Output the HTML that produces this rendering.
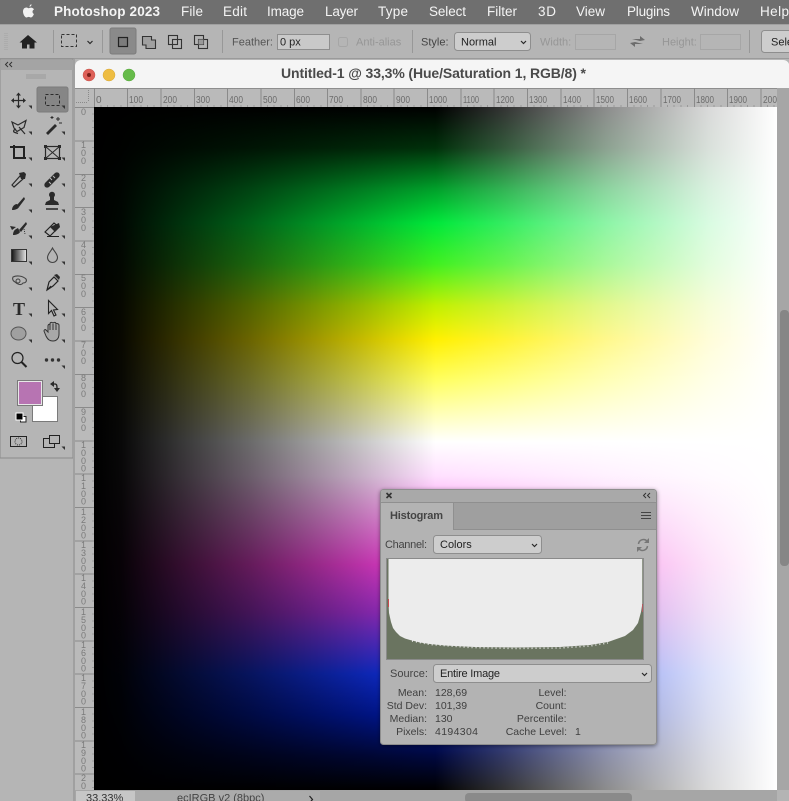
<!DOCTYPE html>
<html><head><meta charset="utf-8"><style>
html,body{margin:0;padding:0;width:789px;height:801px;overflow:hidden;background:#b5b5b5}
#c,#c div{position:absolute;left:94px;top:107px;width:683px;height:683px}
#c div{left:0;top:0}
#c{background:linear-gradient(to bottom,#000 0,#00300a 6%,#00a02a 12%,#00e83a 17%,#40f020 23%,#c0f000 29%,#fff000 34%,#ffff60 40%,#fff 49%,#ffe0ff 54%,#f040d8 67%,#a030d0 74%,#1030e0 83%,#0018a0 89%,#000840 95%,#000 100%)}
#l{background:linear-gradient(to right,#000 0,rgba(0,0,0,.97) 4%,rgba(0,0,0,.78) 13%,rgba(0,0,0,.58) 23%,rgba(0,0,0,.36) 33%,rgba(0,0,0,.12) 44%,rgba(0,0,0,0) 50%)}
#r{background:linear-gradient(to right,rgba(255,255,255,0) 50%,rgba(255,255,255,.2) 60%,rgba(255,255,255,.55) 75%,rgba(255,255,255,.85) 90%,#fff 100%)}
svg{position:absolute;left:0;top:0}
text{font-family:"Liberation Sans",sans-serif}
.m{font-size:13.5px;fill:#f4f4f4}
.o{font-size:10.5px;fill:#3e3e3e}
.d{font-size:10.5px;fill:#969696}
.t{font-size:10px;fill:#6c6c6c}
.v{font-size:9px;fill:#7a7a7a;text-anchor:middle}
.p{font-size:10.5px;fill:#3f3f3f}
.i{fill:none;stroke:#2a2a2a;stroke-width:1.2}
.f{fill:#2a2a2a}
</style></head><body>
<div id="c"><div id="l"></div><div id="r"></div></div>
<svg width="789" height="801" viewBox="0 0 789 801">
<defs><filter id="sh" x="-10%" y="-10%" width="120%" height="120%"><feDropShadow dx="0" dy="1" stdDeviation="2" flood-color="#000" flood-opacity=".45"/></filter></defs>

<!-- menu bar -->
<rect width="789" height="24" fill="#6f6f6f"/>
<path d="M31.5 4.2c-1.1.2-2 1.2-2 2.500 1.200 0 2.100-1.200 2-2.500zM26.500 7.500c-2.200 0-3.500 1.800-3.500 4 0 2.600 1.800 6 3.500 6 .8 0 1.200-.6 2.200-.6s1.300.6 2.200.6c1.300 0 2.500-2 3-3.500-1.500-.7-2-2.900-.4-4.200.3-.2.400-.4.500-.5-.7-1-1.800-1.700-2.900-1.700-1 0-1.700.6-2.400.6-.7 0-1.300-.7-2.200-.7z" fill="#f2f2f2"/>
<text x="54" y="16" class="m" font-weight="bold" textLength="106">Photoshop 2023</text>
<text x="181" y="16" class="m" textLength="22">File</text>
<text x="223" y="16" class="m" textLength="24">Edit</text>
<text x="267" y="16" class="m" textLength="37">Image</text>
<text x="325" y="16" class="m" textLength="33">Layer</text>
<text x="378" y="16" class="m" textLength="30">Type</text>
<text x="429" y="16" class="m" textLength="37">Select</text>
<text x="487" y="16" class="m" textLength="30">Filter</text>
<text x="538" y="16" class="m" textLength="18">3D</text>
<text x="576" y="16" class="m" textLength="29">View</text>
<text x="627" y="16" class="m" textLength="43">Plugins</text>
<text x="691" y="16" class="m" textLength="48">Window</text>
<text x="760" y="16" class="m" textLength="29">Help</text>

<!-- options bar -->
<rect y="24" width="789" height="35" fill="#b5b5b5"/>
<rect y="24" width="789" height="1" fill="#a0a0a0"/>
<rect y="58" width="789" height="1" fill="#9a9a9a"/>
<path d="M5 33v18M7 33v18" stroke="#a2a2a2" stroke-dasharray="1 1"/>
<path d="M28 35l-8.500 7.500h2.500v6h5v-4h2.500v4h5v-6h2.500z" fill="#222"/>
<path d="M53.500 30v23M102.500 30v23M222.500 30v23M412.500 30v23M749.500 30v23" stroke="#989898"/>
<rect x="61.500" y="34.500" width="15" height="12" fill="none" stroke="#333" stroke-dasharray="3 2"/>
<path d="M87.500 41l2.500 2.500 2.500-2.500" class="i"/>
<rect x="110" y="28" width="26" height="26" rx="2" fill="#8a8a8a" stroke="#7c7c7c"/>
<rect x="118.500" y="37.500" width="9" height="9" fill="#7c7c7c" stroke="#222" stroke-width="1.200"/>
<path d="M142.500 36.500h9v3.500h4v8.500h-9.500v-3.500h-3.500z" fill="#a0a0a0" stroke="#333" stroke-width="1.100"/>
<rect x="168.500" y="35.500" width="9" height="9" fill="none" stroke="#333" stroke-width="1.100"/>
<rect x="172.500" y="39.500" width="9" height="9" fill="none" stroke="#333" stroke-width="1.100"/>
<rect x="194.500" y="35.500" width="9" height="9" fill="none" stroke="#333" stroke-width="1.100"/>
<rect x="198.500" y="39.500" width="9" height="9" fill="none" stroke="#333" stroke-width="1.100"/>
<rect x="198.500" y="39.500" width="5" height="5" fill="#999"/>
<text x="232" y="45.500" style="font-size:11px;fill:#555">Feather:</text>
<rect x="277.500" y="34.500" width="52" height="15" fill="#c9c9c9" stroke="#8e8e8e"/>
<text x="280" y="45.500" style="font-size:11px;fill:#222">0 px</text>
<rect x="338.500" y="37.500" width="9" height="9" rx="2" fill="#b5b5b5" stroke="#a6a6a6"/>
<text x="356" y="45.500" class="d" style="font-size:11px">Anti-alias</text>
<text x="421" y="45.500" style="font-size:11px;fill:#444">Style:</text>
<rect x="454.500" y="32.500" width="76" height="18" rx="3" fill="#cdcdcd" stroke="#8e8e8e"/>
<text x="461" y="45.500" style="font-size:11px;fill:#222">Normal</text>
<path d="M521 41l2.500 2.500 2.500-2.500" class="i"/>
<text x="540" y="45.500" class="d" style="font-size:11px">Width:</text>
<rect x="575.500" y="34.500" width="40" height="15" fill="#b5b5b5" stroke="#a6a6a6"/>
<path d="M632 39h8v-3l5 4-5 1zM643 44h-8v3l-5-4 5-1z" fill="#6c6c6c"/>
<text x="662" y="45.500" class="d" style="font-size:11px">Height:</text>
<rect x="700.500" y="34.500" width="40" height="15" fill="#b5b5b5" stroke="#a6a6a6"/>
<rect x="761.500" y="30.500" width="40" height="22" rx="3" fill="#cdcdcd" stroke="#8e8e8e"/>
<text x="771" y="45.500" style="font-size:11px;fill:#222">Sele</text>

<!-- tool panel -->
<rect x="0" y="59" width="73" height="399" fill="#b5b5b5" stroke="#8c8c8c"/>
<rect x="1" y="60" width="72" height="10" fill="#a4a4a4"/>
<path d="M8 62l-2.500 2.500 2.500 2.500M12 62l-2.500 2.500 2.500 2.500" fill="none" stroke="#333"/>
<path d="M27 74v5M29 74v5M31 74v5M33 74v5M35 74v5M37 74v5M39 74v5M41 74v5M43 74v5M45 74v5" stroke="#9c9c9c"/>
<rect x="37" y="87" width="31" height="25" rx="2" fill="#868686" stroke="#7c7c7c"/>
<rect x="45.500" y="94.500" width="14" height="11" fill="none" stroke="#2c2c2c" stroke-dasharray="3 2"/>
<!-- move -->
<path d="M18.500 94v13M12 100.500h13" class="i"/><path d="M18.500 92.500l-2.500 3h5zM18.500 108.500l-2.500-3h5zM11 100.500l3-2.500v5zM26 100.500l-3-2.500v5z" class="f"/>
<!-- lasso -->
<path d="M12 122l6 3 8-4.500-2 7-7 4-3-3.500z" class="i"/><path d="M16 129c-3 1-3 3-1 3.500l3 1" class="i"/><path d="M19 127l6 7" class="i"/>
<!-- wand -->
<path d="M46 133l9-9 2 2-9 9z" fill="#2a2a2a"/><path d="M58 117v4M56 119h4M52 116v3M50.500 117.500h3M62 123h-3" stroke="#2a2a2a"/>
<!-- crop -->
<path d="M14 145v13h12M10 147h14v12" fill="none" stroke="#222" stroke-width="2"/>
<!-- frame -->
<rect x="45.500" y="146.500" width="14" height="12" fill="none" stroke="#2a2a2a" stroke-width="1.200"/><path d="M45.500 146.500l14 12M59.500 146.500l-14 12" stroke="#2a2a2a"/>
<path d="M44 145h3v3h-3zM58 145h3v3h-3zM44 157h3v3h-3zM58 157h3v3h-3z" class="f"/>
<!-- eyedropper -->
<path d="M12 185l8-9 3 3-9 8z" class="i"/><path d="M19 173l5-1 2 2-1 5-4 0z" class="f"/>
<!-- bandage -->
<path d="M45 183l10-10c3-2 6 1 4 4l-10 10c-3 2-6-1-4-4z" class="f"/><path d="M50 178l2 2M53 176l2 2M49 182l2 2" stroke="#bbb"/>
<!-- brush -->
<path d="M24 197l-7 8 2 2 6-8z" class="f"/><path d="M17 204c-2 0-5 2-5 6 3 0 6-1 7-3z" class="f"/>
<!-- stamp -->
<path d="M50 197a3 3 0 1 1 4 0v3l4 2 1 3H45l1-3 4-2z" class="f"/><path d="M46 209h12" stroke="#222" stroke-width="1.500"/>
<!-- history brush -->
<path d="M26 222l-7 8 2 2 6-8z" class="f"/><path d="M18 228c-2 1-5 2-5 7 3 0 6-1 7-3z" class="f"/><path d="M10 226l6 1-4 3z" class="f"/><path d="M24 229l1 5" stroke="#333" stroke-dasharray="1 1"/>
<!-- eraser -->
<path d="M45 232l9-9 5 4-9 9z" fill="none" stroke="#222" stroke-width="1.200"/><path d="M50 227l9-4 1 4-5 5z" class="f"/><path d="M47 236.500h12" stroke="#222"/>
<!-- gradient -->
<defs><linearGradient id="g"><stop offset="0" stop-color="#111"/><stop offset="1" stop-color="#e8e8e8"/></linearGradient></defs>
<rect x="11.500" y="249.500" width="15" height="12" fill="url(#g)" stroke="#333"/>
<!-- drop -->
<path d="M52.500 248c-2 4-5 6-5 9.500a5 5 0 0 0 10 0c0-3.500-3-5.500-5-9.500z" fill="none" stroke="#444" stroke-width="1.100"/>
<!-- lasso shape -->
<path d="M13 277c4-2 10-1 13 2 1 2 0 4-3 4-2 3-6 1-8-1-2-1-3-3-2-5z" fill="none" stroke="#444" stroke-width="1.100"/><circle cx="18" cy="281" r="2" fill="none" stroke="#444"/>
<!-- pen -->
<path d="M47 290l2-8 5-5 4 4-5 5z" fill="none" stroke="#222" stroke-width="1.200"/><path d="M54 275l3-1 3 3-1 3z" class="f"/><path d="M47 290l4-4" stroke="#222"/>
<!-- type -->
<text x="13" y="315" style="font-family:'Liberation Serif',serif;font-weight:bold;font-size:18px;fill:#2a2a2a" textLength="13">T</text>
<!-- arrow -->
<path d="M48.500 300.500v13l3-3 2.500 5.500 2-1-2.500-5 4-.5z" fill="#b5b5b5" stroke="#222" stroke-width="1.100"/>
<!-- ellipse -->
<ellipse cx="18.500" cy="333.500" rx="7.500" ry="6.500" fill="#a0a0a0" stroke="#555"/>
<!-- hand -->
<path d="M46 336l-2-5c0-1 1-2 2-1l2 2v-6c0-2 2-2 2-1v-1c0-2 2-2 3-1 1-1 3-1 3 1 1-1 3 0 3 1v9c0 5-3 7-6 7s-5-1-7-5z" fill="#a8a8a8" stroke="#333"/><path d="M50 325v5M53 324v6M56 325v5" stroke="#333"/>
<!-- zoom -->
<circle cx="17.500" cy="358" r="5.500" fill="none" stroke="#222" stroke-width="1.200"/><path d="M21.500 362l5 5" stroke="#222" stroke-width="2"/>
<!-- dots -->
<circle cx="46.500" cy="360" r="1.700" fill="#333"/><circle cx="52.500" cy="360" r="1.700" fill="#333"/><circle cx="58.500" cy="360" r="1.700" fill="#333"/>
<!-- corner triangles -->
<g transform="translate(0,-2)"><path d="M32 111v-3.500h-3.500zM32 137v-3.500h-3.500zM32 163v-3.500h-3.500zM32 189v-3.500h-3.500zM32 215v-3.500h-3.500zM32 241v-3.500h-3.500zM32 267v-3.500h-3.500zM32 293v-3.500h-3.500zM32 319v-3.500h-3.500zM32 345v-3.500h-3.500zM65 111v-3.500h-3.500zM65 137v-3.500h-3.500zM65 163v-3.500h-3.500zM65 189v-3.500h-3.500zM65 215v-3.500h-3.500zM65 241v-3.500h-3.500zM65 267v-3.500h-3.500zM65 293v-3.500h-3.500zM65 319v-3.500h-3.500zM65 345v-3.500h-3.500zM65 371v-3.500h-3.500zM65 452v-3.500h-3.500z" fill="#333"/></g>
<!-- swatches -->
<rect x="32.500" y="396.500" width="25" height="25" fill="#fff" stroke="#7a7a7a"/>
<rect x="17.500" y="380.500" width="25" height="25" fill="#e8e8e8" stroke="#7a7a7a"/>
<rect x="19" y="382" width="22" height="22" fill="#b774b2"/>
<path d="M51 384h4c2 0 2 2 2 5" fill="none" stroke="#222" stroke-width="1.300"/><path d="M54 381l-4 3 4 3zM54 388h6l-3 4z" class="f"/>
<rect x="20.500" y="416.500" width="5.500" height="5.500" fill="#fff" stroke="#222"/>
<rect x="16" y="413" width="7" height="7" fill="#000" stroke="#fff"/>
<!-- quick mask, screen -->
<rect x="10.500" y="436.500" width="16" height="10" fill="none" stroke="#222"/><circle cx="18.500" cy="441.500" r="3.500" fill="none" stroke="#333" stroke-dasharray="1 1"/>
<rect x="43.500" y="438.500" width="11" height="9" fill="#b5b5b5" stroke="#222"/><rect x="49.500" y="435.500" width="10" height="8" fill="#b5b5b5" stroke="#222"/>

<!-- document window chrome -->
<path d="M75 90V66a6 6 0 0 1 6-6H783a6 6 0 0 1 6 4V88H75z" fill="#f5f5f5"/>
<rect x="73" y="59" width="2" height="742" fill="#a0a0a0"/>
<circle cx="89" cy="75" r="6" fill="#dd6058" stroke="#c8574f" stroke-width=".5"/><circle cx="89" cy="75" r="2" fill="#7a1f1a"/>
<circle cx="109" cy="75" r="6" fill="#eebd42" stroke="#d8a93a" stroke-width=".5"/>
<circle cx="129" cy="75" r="6" fill="#66bb4a" stroke="#5aa840" stroke-width=".5"/>
<text x="281" y="78" style="font-size:14px;font-weight:bold;fill:#4a4a4a" textLength="305">Untitled-1 @ 33,3% (Hue/Saturation 1, RGB/8) *</text>

<!-- rulers -->
<rect x="75" y="88" width="702" height="19" fill="#bababa"/>
<rect x="75" y="88" width="702" height="1" fill="#8e8e8e"/>
<rect x="75" y="107" width="19" height="694" fill="#bababa"/>
<path d="M94.500 88v19M127.500 88v19M161 88v19M194.500 88v19M227.500 88v19M261 88v19M294.500 88v19M327.500 88v19M361 88v19M394 88v19M427.500 88v19M461 88v19M494 88v19M527.500 88v19M561 88v19M594 88v19M627.500 88v19M661 88v19M694.500 88v19M727.500 88v19M761 88v19" stroke="#8a8a8a"/>
<path d="M101 105v2M107.500 105v2M114 105v2M121 105v2M134 105v2M141 105v2M147.500 105v2M154 105v2M167.500 105v2M174 105v2M181 105v2M187.500 105v2M201 105v2M207.500 105v2M214 105v2M221 105v2M234 105v2M241 105v2M247.500 105v2M254 105v2M267.500 105v2M274 105v2M281 105v2M287.500 105v2M301 105v2M307.500 105v2M314 105v2M321 105v2M334 105v2M341 105v2M347.500 105v2M354 105v2M367.500 105v2M374 105v2M381 105v2M387.500 105v2M401 105v2M407.500 105v2M414 105v2M421 105v2M434 105v2M441 105v2M447.500 105v2M454 105v2M467.500 105v2M474 105v2M481 105v2M487.500 105v2M501 105v2M507.500 105v2M514 105v2M521 105v2M534 105v2M541 105v2M547.500 105v2M554 105v2M567.500 105v2M574 105v2M581 105v2M587.500 105v2M601 105v2M607.500 105v2M614 105v2M621 105v2M634 105v2M641 105v2M647.500 105v2M654 105v2M667.500 105v2M674 105v2M681 105v2M687.500 105v2M701 105v2M707.500 105v2M714 105v2M721 105v2M734 105v2M741 105v2M747.500 105v2M754 105v2M767.500 105v2M774 105v2" stroke="#999"/>
<g>
<text x="96" y="103" class="t">0</text>
<text x="129" y="103" class="t" textLength="14" lengthAdjust="spacingAndGlyphs">100</text>
<text x="163" y="103" class="t" textLength="14" lengthAdjust="spacingAndGlyphs">200</text>
<text x="196" y="103" class="t" textLength="14" lengthAdjust="spacingAndGlyphs">300</text>
<text x="229" y="103" class="t" textLength="14" lengthAdjust="spacingAndGlyphs">400</text>
<text x="263" y="103" class="t" textLength="14" lengthAdjust="spacingAndGlyphs">500</text>
<text x="296" y="103" class="t" textLength="14" lengthAdjust="spacingAndGlyphs">600</text>
<text x="329" y="103" class="t" textLength="14" lengthAdjust="spacingAndGlyphs">700</text>
<text x="363" y="103" class="t" textLength="14" lengthAdjust="spacingAndGlyphs">800</text>
<text x="396" y="103" class="t" textLength="14" lengthAdjust="spacingAndGlyphs">900</text>
<text x="429" y="103" class="t" textLength="18" lengthAdjust="spacingAndGlyphs">1000</text>
<text x="463" y="103" class="t" textLength="16" lengthAdjust="spacingAndGlyphs">1100</text>
<text x="496" y="103" class="t" textLength="18" lengthAdjust="spacingAndGlyphs">1200</text>
<text x="529" y="103" class="t" textLength="18" lengthAdjust="spacingAndGlyphs">1300</text>
<text x="563" y="103" class="t" textLength="18" lengthAdjust="spacingAndGlyphs">1400</text>
<text x="596" y="103" class="t" textLength="18" lengthAdjust="spacingAndGlyphs">1500</text>
<text x="629" y="103" class="t" textLength="18" lengthAdjust="spacingAndGlyphs">1600</text>
<text x="663" y="103" class="t" textLength="18" lengthAdjust="spacingAndGlyphs">1700</text>
<text x="696" y="103" class="t" textLength="18" lengthAdjust="spacingAndGlyphs">1800</text>
<text x="729" y="103" class="t" textLength="18" lengthAdjust="spacingAndGlyphs">1900</text>
<text x="763" y="103" class="t" textLength="14" lengthAdjust="spacingAndGlyphs">200</text>
</g>
<path d="M75 107.500h19M75 141h19M75 174.500h19M75 207.500h19M75 241h19M75 274.500h19M75 307.500h19M75 341h19M75 374.500h19M75 407.500h19M75 441h19M75 474h19M75 507.500h19M75 541h19M75 574h19M75 607.500h19M75 641h19M75 674h19M75 707.500h19M75 741h19M75 774h19" stroke="#8a8a8a"/>
<path d="M92 114h2M92 121h2M92 127.500h2M92 134h2M92 147.500h2M92 154h2M92 161h2M92 167.500h2M92 181h2M92 187.500h2M92 194h2M92 201h2M92 214h2M92 221h2M92 227.500h2M92 234h2M92 247.500h2M92 254h2M92 261h2M92 267.500h2M92 281h2M92 287.500h2M92 294h2M92 301h2M92 314h2M92 321h2M92 327.500h2M92 334h2M92 347.500h2M92 354h2M92 361h2M92 367.500h2M92 381h2M92 387.500h2M92 394h2M92 401h2M92 414h2M92 421h2M92 427.500h2M92 434h2M92 447.500h2M92 454h2M92 461h2M92 467.500h2M92 481h2M92 487.500h2M92 494h2M92 501h2M92 514h2M92 521h2M92 527.500h2M92 534h2M92 547.500h2M92 554h2M92 561h2M92 567.500h2M92 581h2M92 587.500h2M92 594h2M92 601h2M92 614h2M92 621h2M92 627.500h2M92 634h2M92 647.500h2M92 654h2M92 661h2M92 667.500h2M92 681h2M92 687.500h2M92 694h2M92 701h2M92 714h2M92 721h2M92 727.500h2M92 734h2M92 747.500h2M92 754h2M92 761h2M92 767.500h2M92 781h2M92 787.500h2" stroke="#999"/>
<text x="83.500" y="115" class="v">0</text>
<text x="83.500" y="148" class="v">1</text><text x="83.500" y="156" class="v">0</text><text x="83.500" y="164" class="v">0</text>
<text x="83.500" y="181" class="v">2</text><text x="83.500" y="189" class="v">0</text><text x="83.500" y="197" class="v">0</text>
<text x="83.500" y="215" class="v">3</text><text x="83.500" y="223" class="v">0</text><text x="83.500" y="231" class="v">0</text>
<text x="83.500" y="248" class="v">4</text><text x="83.500" y="256" class="v">0</text><text x="83.500" y="264" class="v">0</text>
<text x="83.500" y="281" class="v">5</text><text x="83.500" y="289" class="v">0</text><text x="83.500" y="297" class="v">0</text>
<text x="83.500" y="315" class="v">6</text><text x="83.500" y="323" class="v">0</text><text x="83.500" y="331" class="v">0</text>
<text x="83.500" y="348" class="v">7</text><text x="83.500" y="356" class="v">0</text><text x="83.500" y="364" class="v">0</text>
<text x="83.500" y="381" class="v">8</text><text x="83.500" y="389" class="v">0</text><text x="83.500" y="397" class="v">0</text>
<text x="83.500" y="415" class="v">9</text><text x="83.500" y="423" class="v">0</text><text x="83.500" y="431" class="v">0</text>
<text x="83.500" y="448" class="v">1</text><text x="83.500" y="456" class="v">0</text><text x="83.500" y="464" class="v">0</text><text x="83.500" y="471.500" class="v">0</text>
<text x="83.500" y="481" class="v">1</text><text x="83.500" y="489" class="v">1</text><text x="83.500" y="497" class="v">0</text><text x="83.500" y="504.500" class="v">0</text>
<text x="83.500" y="515" class="v">1</text><text x="83.500" y="523" class="v">2</text><text x="83.500" y="531" class="v">0</text><text x="83.500" y="538.500" class="v">0</text>
<text x="83.500" y="548" class="v">1</text><text x="83.500" y="556" class="v">3</text><text x="83.500" y="564" class="v">0</text><text x="83.500" y="571.500" class="v">0</text>
<text x="83.500" y="581" class="v">1</text><text x="83.500" y="589" class="v">4</text><text x="83.500" y="597" class="v">0</text><text x="83.500" y="604.500" class="v">0</text>
<text x="83.500" y="615" class="v">1</text><text x="83.500" y="623" class="v">5</text><text x="83.500" y="631" class="v">0</text><text x="83.500" y="638.500" class="v">0</text>
<text x="83.500" y="648" class="v">1</text><text x="83.500" y="656" class="v">6</text><text x="83.500" y="664" class="v">0</text><text x="83.500" y="671.500" class="v">0</text>
<text x="83.500" y="681" class="v">1</text><text x="83.500" y="689" class="v">7</text><text x="83.500" y="697" class="v">0</text><text x="83.500" y="704.500" class="v">0</text>
<text x="83.500" y="715" class="v">1</text><text x="83.500" y="723" class="v">8</text><text x="83.500" y="731" class="v">0</text><text x="83.500" y="738.500" class="v">0</text>
<text x="83.500" y="748" class="v">1</text><text x="83.500" y="756" class="v">9</text><text x="83.500" y="764" class="v">0</text><text x="83.500" y="771.500" class="v">0</text>
<text x="83.500" y="781" class="v">2</text><text x="83.500" y="789" class="v">0</text>
<path d="M76 102.500h12M88.500 90v12" stroke="#8a8a8a" stroke-dasharray="1 1" fill="none"/>

<!-- right gutter + bottom -->
<rect x="777" y="88" width="12" height="702" fill="#a6a6a6"/>
<rect x="780" y="310" width="9" height="256" rx="4" fill="#868686"/>
<rect x="75" y="790" width="702" height="11" fill="#a6a6a6"/>
<rect x="76" y="791" width="59" height="10" fill="#c6c6c6"/>
<rect x="135" y="791" width="185" height="10" fill="#ababab"/>
<text x="86" y="801.500" style="font-size:11px;fill:#333">33.33%</text>
<text x="177" y="801.500" style="font-size:11px;fill:#444">ecIRGB v2 (8bpc)</text>
<path d="M309.500 796l3 3.500-3 3.500" fill="none" stroke="#222" stroke-width="1.200"/>
<rect x="465" y="793" width="167" height="10" rx="4" fill="#8a8a8a"/>
<rect x="777" y="790" width="12" height="11" fill="#b4b4b4"/>

<!-- histogram panel -->
<g filter="url(#sh)"><rect x="380.500" y="489.500" width="276" height="255" rx="3" fill="#b3b3b3" stroke="#8e8e8e"/></g>
<rect x="381" y="490" width="275" height="12" rx="2" fill="#a9a9a9"/>
<path d="M386.500 493l5 5M391.500 493l-5 5" stroke="#333" stroke-width="1.600"/>
<path d="M646 493l-2.500 2.500 2.500 2.500M650 493l-2.500 2.500 2.500 2.500" fill="none" stroke="#333"/>
<rect x="381" y="502" width="275" height="28" fill="#9f9f9f"/>
<rect x="381" y="502" width="275" height="1" fill="#8f8f8f"/>
<rect x="381" y="529" width="275" height="1" fill="#8f8f8f"/>
<rect x="381" y="503" width="72" height="27" fill="#b3b3b3"/>
<rect x="453" y="503" width="1" height="27" fill="#8f8f8f"/>
<text x="390" y="519" style="font-size:11px;font-weight:bold;fill:#444" textLength="53">Histogram</text>
<path d="M641 512.500h10M641 515.500h10M641 518.500h10" stroke="#444"/>
<text x="385" y="548" style="font-size:11px;fill:#444" textLength="42">Channel:</text>
<rect x="433.500" y="535.500" width="108" height="18" rx="3" fill="#cdcdcd" stroke="#8e8e8e"/>
<text x="440" y="548" style="font-size:11px;fill:#222">Colors</text>
<path d="M532 544l2.500 2.500 2.500-2.500" class="i"/>
<path d="M638.500 544a5 5 0 0 1 8.500-3l1 1M647.500 546a5 5 0 0 1-8.500 3l-1-1" fill="none" stroke="#777" stroke-width="1.500"/><path d="M649 538v5h-5zM637 552v-5h5z" fill="#777"/>
<rect x="386.500" y="558.500" width="257" height="101" fill="#6a7460" stroke="#8a8a8a"/>
<polygon points="388.500,559 388.500,602 389,613 391,622 393,628 396,632 400,636 405,638.500 410,640 420,642.500 430,644 445,645.500 475,647 515,647.500 560,647 590,645 608,642 625,636 633,630 638,623 641,612 642.300,604 642.300,559" fill="#ececec"/>
<path d="M412 641l18 3.500 40 3 45 1 45-.5 30-2 18-3" fill="none" stroke="#ececec" stroke-width="1.500" stroke-dasharray="1 3"/>
<path d="M388.500 599v8" stroke="#c84a50"/><path d="M642.500 604v8" stroke="#b25a60"/>
<text x="390" y="677" style="font-size:11px;fill:#444">Source:</text>
<rect x="433.500" y="664.500" width="218" height="18" rx="3" fill="#cdcdcd" stroke="#8e8e8e"/>
<text x="440" y="677" style="font-size:11px;fill:#222" textLength="60">Entire Image</text>
<path d="M642 673l2.500 2.500 2.500-2.500" class="i"/>
<g>
<text x="427" y="696" text-anchor="end" class="p">Mean:</text><text x="435" y="696" class="p">128,69</text>
<text x="427" y="709" text-anchor="end" class="p">Std Dev:</text><text x="435" y="709" class="p">101,39</text>
<text x="427" y="722" text-anchor="end" class="p">Median:</text><text x="435" y="722" class="p">130</text>
<text x="427" y="735" text-anchor="end" class="p">Pixels:</text><text x="435" y="735" class="p" textLength="43">4194304</text>
<text x="566.500" y="696" text-anchor="end" class="p">Level:</text>
<text x="566.500" y="709" text-anchor="end" class="p">Count:</text>
<text x="566.500" y="722" text-anchor="end" class="p">Percentile:</text>
<text x="567" y="735" text-anchor="end" class="p">Cache Level:</text><text x="575" y="735" class="p">1</text>
</g>
</svg>
</body></html>
